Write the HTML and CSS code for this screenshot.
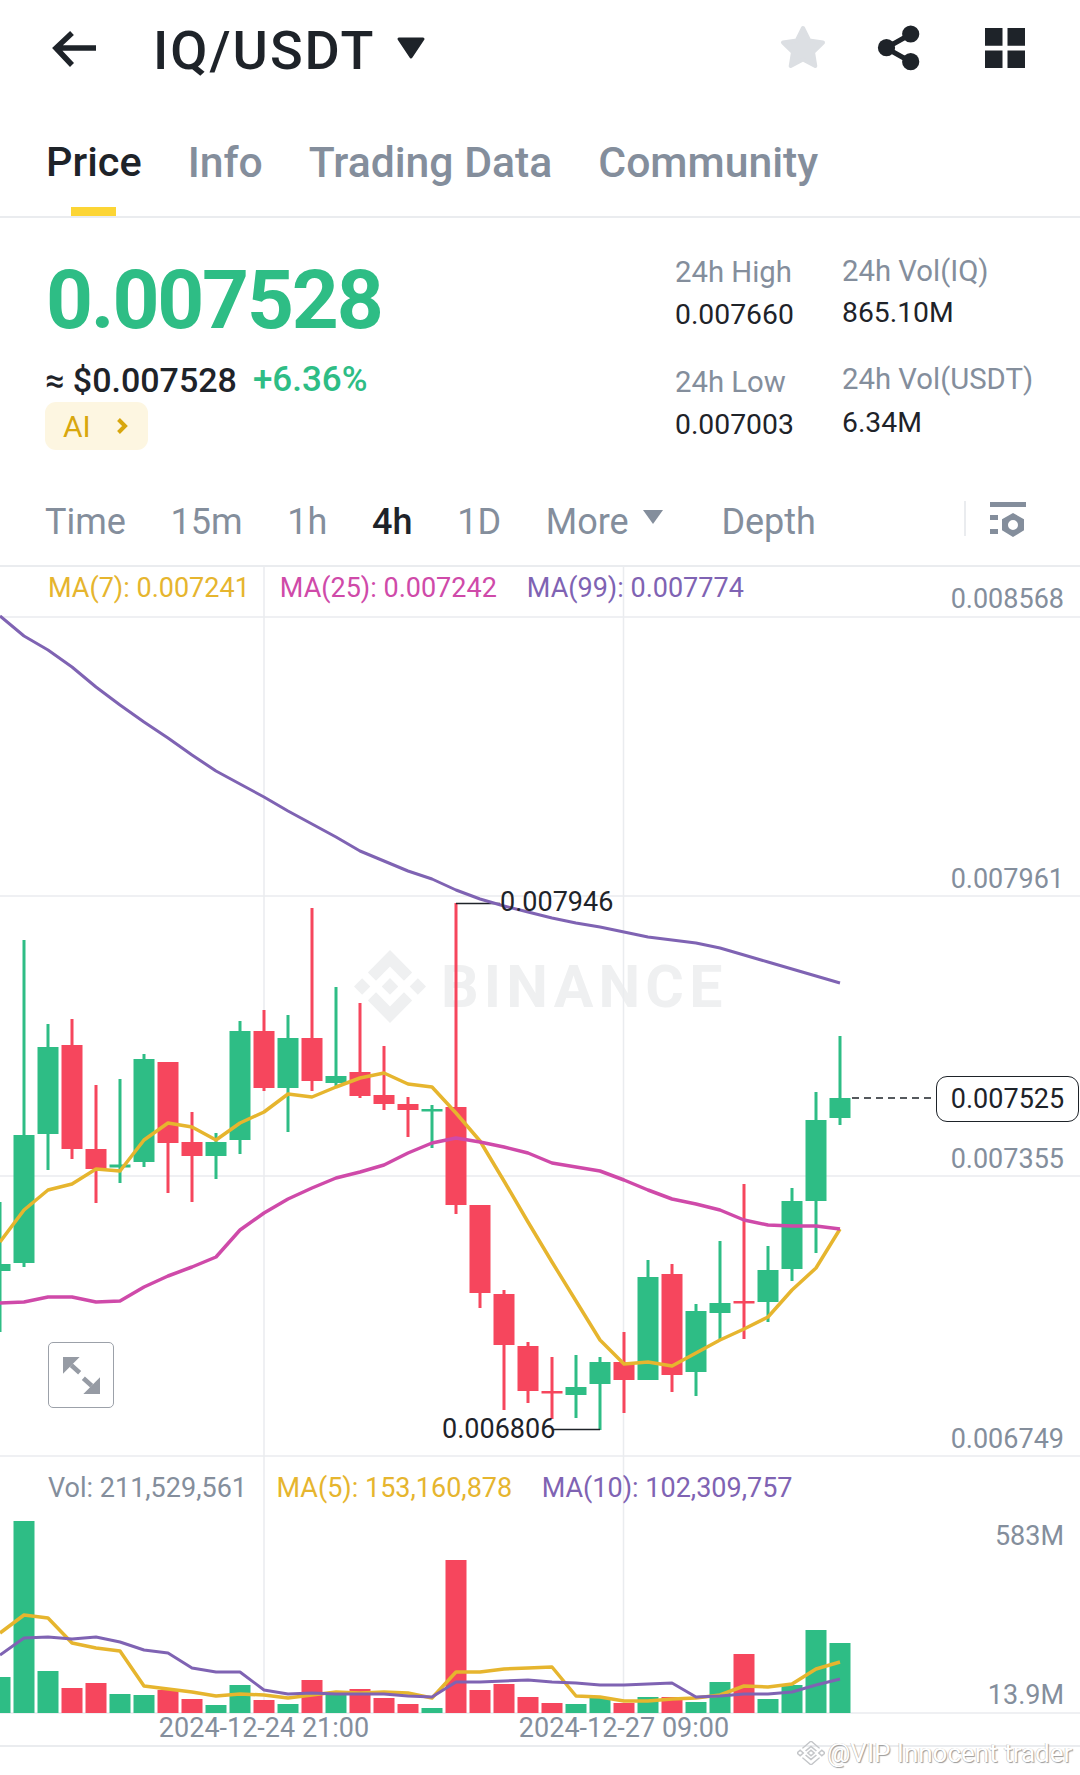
FILE: index.html
```html
<!DOCTYPE html>
<html lang="en">
<head>
<meta charset="utf-8">
<title>IQ/USDT</title>
<link rel="stylesheet" href="styles.css">
</head>
<body>
<div class="page">
  <header class="topbar">
    <svg class="ico-back" viewBox="50 25 50 46"><path d="M96 48H57M72 33 56 48l16 17"/></svg>
    <h1 class="pair">IQ/USDT</h1>
    <svg class="ico-caret" viewBox="396 36 32 26"><path d="M400 40h24l-12 18z"/></svg>
    <div class="top-actions">
      <svg class="ico-star" viewBox="780 25 46 48"><path d="M803 29l6.2 12.5 13.8 2-10 9.7 2.3 13.8-12.3-6.5-12.3 6.5 2.3-13.8-10-9.7 13.8-2z"/></svg>
      <svg class="ico-share" viewBox="876 24 46 48"><path class="link" d="M911 34 886 48l25 14"/><circle cx="910.7" cy="34" r="8.6"/><circle cx="886.5" cy="47.7" r="8.6"/><circle cx="910.7" cy="61.7" r="8.6"/></svg>
      <svg class="ico-grid" viewBox="985 28 40 40"><path d="M985 28h17.5v17.7H985zM1007.5 28H1025v17.7h-17.5zM985 50.5h17.5V68H985zM1007.5 50.5H1025V68h-17.5z"/></svg>
    </div>
  </header>

  <nav class="tabs">
    <div class="tab tab-on">Price<span class="tab-bar"></span></div>
    <div class="tab">Info</div>
    <div class="tab">Trading Data</div>
    <div class="tab">Community</div>
  </nav>

  <section class="summary">
    <div class="sum-left">
      <div class="last">0.007528</div>
      <div class="fiat"><span class="usd">≈ $0.007528</span><span class="chg">+6.36%</span></div>
      <div class="ai">AI<svg class="ico-chev" viewBox="0 0 12 18"><path d="M2.5 2.5 9 9l-6.500 6.500"/></svg></div>
    </div>
    <div class="stats">
      <dl class="stat-col stat-a">
        <dt>24h High</dt><dd>0.007660</dd>
        <dt class="second">24h Low</dt><dd>0.007003</dd>
      </dl>
      <dl class="stat-col stat-b">
        <dt>24h Vol(IQ)</dt><dd>865.10M</dd>
        <dt class="second">24h Vol(USDT)</dt><dd>6.34M</dd>
      </dl>
    </div>
  </section>

  <div class="ranges">
    <span class="range">Time</span>
    <span class="range">15m</span>
    <span class="range">1h</span>
    <span class="range range-on">4h</span>
    <span class="range">1D</span>
    <span class="range range-more">More<svg class="ico-more" viewBox="0 0 20 14"><path d="M0 0h20L10 14z"/></svg></span>
    <span class="range">Depth</span>
    <span class="range-sep"></span>
    <svg class="ico-setup" viewBox="990 502 36 36"><path d="M990 503h36v5h-36zM990 516h8v5h-8zM990 530h8v5h-8z"/><path fill-rule="evenodd" d="M1013 514l11 6.200v11L1013 538l-11-6.800v-11zM1013 521a5 5 0 1 0 0 10 5 5 0 0 0 0-10z"/></svg>
  </div>

  <section class="chart">
    <div class="wm">
      <svg class="wm-logo" viewBox="0 0 126.610 126.610" preserveAspectRatio="none"><path d="M38.730 53.200 63.300 28.640l24.590 24.580 14.300-14.300L63.300 0 24.420 38.900l14.310 14.300zM0 63.300l14.300-14.310L28.610 63.300 14.300 77.610zM38.730 73.410 63.300 97.970l24.590-24.580 14.310 14.290L63.300 126.610 24.420 87.720zM98 63.310l14.300-14.310 14.310 14.300-14.310 14.310zM77.830 63.300 63.300 48.760 48.780 63.270 63.300 77.780z"/></svg>
      <span class="wm-text">BINANCE</span>
    </div>

    <svg class="plot" viewBox="0 565 1080 1180">
      <path class="rule" d="M0 566H1080"/>
      <path class="grid" d="M0 617H1080M0 896H1080M0 1176H1080M0 1456H1080M0 1713H1080M264 565V1713M623.500 565V1713"/>
      <path class="wick up" d="M0 1202V1332M24 940V1267M48 1024V1170M120 1079V1183M144 1054V1167M216 1133V1179M240 1021V1154M288 1015V1132M336 987V1087M432 1105V1148M576 1355V1418M600 1357V1430M648 1260V1380M696 1304V1396M720 1241V1339M768 1246V1322M792 1188V1281M816 1092V1253M840 1036V1125"/>
      <path class="wick dn" d="M72 1019V1159M96 1085V1203M168 1062V1193M192 1112V1202M264 1010V1091M312 908V1091M360 1003V1098M384 1046V1110M408 1097V1137M456 903V1214M480 1205V1308M504 1290V1410M528 1342V1403M552 1357V1419M624 1332V1413M672 1264V1392M744 1184V1339"/>
      <path class="body up" d="M0 1264V1271M24 1135V1263M48 1047V1134M120 1164.500V1167.500M144 1059V1162M216 1142V1156M240 1031V1140M288 1038V1088M336 1076V1083M432 1109V1111.500M576 1387V1395M600 1362V1384M648 1277V1380M696 1311V1372M720 1303V1313M768 1270V1302M792 1201V1269M816 1120V1201M840 1098V1118"/>
      <path class="body dn" d="M72 1045V1149M96 1149V1169M168 1062V1143M192 1142V1156M264 1031V1088M312 1038V1081M360 1072V1096M384 1095V1104M408 1104V1110M456 1107V1205M480 1205V1293M504 1294V1345M528 1346V1391M552 1391V1393.500M624 1362V1380M672 1274V1375M744 1301V1303.500"/>
      <path class="leader" d="M456 903.500H500M553 1429.500H600"/>
      <path class="last-dash" d="M852 1098H936"/>
      <polyline class="ma ma7" points="0,1242 24,1210 48,1190 72,1184 96,1169 120,1171 144,1140 168,1123 192,1127 216,1140 240,1123 264,1112 288,1094 312,1097 336,1087 360,1078 384,1073 408,1084 432,1087 456,1113 480,1141 504,1181 528,1222 552,1262 576,1301 600,1340 624,1364 648,1362 672,1366 696,1353 720,1340 744,1329 768,1317 792,1290 816,1268 840,1229"/>
      <polyline class="ma ma25" points="0,1303 24,1302 48,1297 72,1297 96,1302 120,1301 144,1287 168,1276 192,1267 216,1257 240,1230 264,1213 288,1199 312,1188 336,1178 360,1172 384,1165 408,1153 432,1143 456,1138 480,1142 504,1147 528,1153 552,1163 576,1167 600,1171 624,1180 648,1190 672,1199 696,1204 720,1210 744,1220 768,1225 792,1226 816,1226 840,1229"/>
      <polyline class="ma ma99" points="0,616 24,636 48,650 72,667 96,687 120,705 144,722 168,738 192,755 216,771 240,784 264,797 288,811 312,824 336,837 360,851 384,861 408,871 432,879 456,890 480,899 504,906 528,912 552,918 576,923 600,927 624,932 648,937 672,940 696,943 720,948 744,955 768,962 792,969 816,976 840,983"/>
      <path class="body up" d="M0 1677V1713M24 1521V1713M48 1671V1713M120 1694V1713M144 1695V1713M216 1705V1713M240 1685V1713M288 1704V1713M336 1693V1713M432 1708V1713M576 1704V1713M600 1697V1713M648 1697V1713M696 1702V1713M720 1682V1713M768 1699V1713M792 1685V1713M816 1630V1713M840 1643V1713"/>
      <path class="body dn" d="M72 1688V1713M96 1683V1713M168 1690V1713M192 1699V1713M264 1700V1713M312 1680V1713M360 1689V1713M384 1698V1713M408 1704V1713M456 1560V1713M480 1690V1713M504 1684V1713M528 1697V1713M552 1703V1713M624 1703V1713M672 1697V1713M744 1654V1713"/>
      <polyline class="ma ma7" points="0,1633 24,1615 48,1618 72,1643 96,1648 120,1651 144,1686 168,1689 192,1692 216,1696 240,1694 264,1695 288,1698 312,1695 336,1692 360,1693 384,1692 408,1693 432,1698 456,1672 480,1672 504,1669 528,1668 552,1667 576,1696 600,1697 624,1701 648,1701 672,1699 696,1698 720,1695 744,1686 768,1687 792,1684 816,1669 840,1662"/>
      <polyline class="ma ma99" points="0,1655 24,1638 48,1637 72,1639 96,1637 120,1642 144,1650 168,1653 192,1668 216,1672 240,1672 264,1690 288,1694 312,1693 336,1694 360,1694 384,1694 408,1696 432,1697 456,1682 480,1682 504,1681 528,1680 552,1682 576,1683 600,1685 624,1685 648,1684 672,1683 696,1697 720,1696 744,1694 768,1694 792,1692 816,1685 840,1679"/>
    </svg>

    <div class="legend legend-price">
      <span class="c-y">MA(7): 0.007241</span>
      <span class="c-m">MA(25): 0.007242</span>
      <span class="c-p">MA(99): 0.007774</span>
    </div>
    <div class="legend legend-vol">
      <span class="c-g">Vol: 211,529,561</span>
      <span class="c-y">MA(5): 153,160,878</span>
      <span class="c-p">MA(10): 102,309,757</span>
    </div>

    <span class="ax ax-1">0.008568</span>
    <span class="ax ax-2">0.007961</span>
    <span class="ax ax-3">0.007355</span>
    <span class="ax ax-4">0.006749</span>
    <span class="ax ax-5">583M</span>
    <span class="ax ax-6">13.9M</span>
    <span class="date date-1">2024-12-24 21:00</span>
    <span class="date date-2">2024-12-27 09:00</span>
    <span class="mark mark-hi">0.007946</span>
    <span class="mark mark-lo">0.006806</span>
    <span class="now">0.007525</span>

    <div class="expand">
      <svg class="ico-expand" viewBox="0 0 40 40"><path d="M0 0h18L0 18zM40 40H22L40 22z"/><path class="stem" d="M9 9l9 8M22 23l9 8"/></svg>
    </div>
  </section>

  <div class="credit">
    <svg class="credit-logo" viewBox="0 0 126.610 126.610" preserveAspectRatio="none"><path d="M38.730 53.200 63.300 28.640l24.590 24.580M24.420 38.900 63.300 0l38.890 38.920M14.300 49 0 63.300l14.300 14.310L28.610 63.300zM38.730 73.410 63.300 97.970l24.590-24.580M24.420 87.720 63.300 126.610l38.890-38.920M112.300 49 98 63.310l14.300 14.300 14.310-14.310zM63.300 48.760 48.780 63.270 63.300 77.780 77.830 63.300z"/></svg>
    <span class="credit-text">@VIP Innocent trader</span>
  </div>
</div>
</body>
</html>
```
FILE: styles.css
```css
* { box-sizing: border-box; }
html, body { margin: 0; padding: 0; background: #fff; }
body { font-family: Roboto, "Noto Sans", sans-serif; color: #1e2329; }
.page { width: 1080px; height: 1775px; position: relative; overflow: hidden; }

/* top bar */
.topbar { height: 96px; display: flex; align-items: center; padding-left: 50px; }
.ico-back { width: 50px; height: 46px; fill: none; stroke: #1e2329; stroke-width: 5.500; }
.pair { margin: 6px 0 0 53px; font-size: 54px; font-weight: 500; letter-spacing: 2px; line-height: 60px; white-space: nowrap; }
.ico-caret { width: 32px; height: 26px; margin: -1px 0 0 20px; fill: #1e2329; stroke: #1e2329; stroke-width: 3; stroke-linejoin: round; }
.top-actions { margin-left: auto; display: flex; align-items: center; padding-right: 55px; }
.ico-star { width: 46px; height: 48px; fill: #dcdfe3; stroke: #dcdfe3; stroke-width: 4; stroke-linejoin: round; }
.ico-share { width: 46px; height: 48px; margin-left: 50px; fill: #1e2329; }
.ico-share .link { fill: none; stroke: #1e2329; stroke-width: 5; }
.ico-grid { width: 40px; height: 40px; margin-left: 63px; fill: #1e2329; }

/* tabs */
.tabs { height: 122px; padding: 41px 0 0 46px; display: flex; gap: 46px; border-bottom: 2px solid #eaecef; }
.tab { display: flex; flex-direction: column; align-items: center; font-size: 42.700px; font-weight: 500; line-height: 50px; color: #848e9c; white-space: nowrap; }
.tab-on { color: #1e2329; font-size: 41.500px; }
.tab-bar { width: 45px; height: 9px; margin-top: 20px; background: #fcd535; }

/* summary */
.summary { height: 262px; display: flex; justify-content: space-between; }
.sum-left { padding: 42px 0 0 45px; }
.last { font-size: 82px; font-weight: 700; line-height: 80px; color: #2ebd85; letter-spacing: -2.200px; margin-left: 1px; }
.fiat { margin-top: 20px; height: 40px; line-height: 40px; display: flex; gap: 16px; white-space: nowrap; font-size: 34px; font-weight: 500; }
.chg { color: #2ebd85; font-size: 35px; }
.ai { margin-top: 2px; width: 103px; height: 48px; padding-left: 18px; display: flex; align-items: center; gap: 25px; border-radius: 11px; background: #fdf6e1; color: #d8a70e; font-size: 30px; }
.ico-chev { width: 12px; height: 18px; fill: none; stroke: #d8a70e; stroke-width: 4; }
.stats { width: 405px; display: flex; }
.stat-col { margin: 0; font-size: 29px; line-height: 42px; white-space: nowrap; }
.stat-col dt { color: #848e9c; font-size: 29.300px; }
.stat-col dd { margin: 0; color: #1e2329; font-size: 28.300px; }
.stat-a dt { line-height: 43px; }
.stat-a dt.second { margin-top: 25px; }
.stat-a { width: 167px; padding-top: 33px; }
.stat-b { padding-top: 32px; }
.stat-b dt.second { margin-top: 22px; line-height: 46px; }

/* ranges */
.ranges { height: 85px; padding: 0 0 2px 45px; display: flex; align-items: center; gap: 44.700px; font-size: 36px; color: #848e9c; }
.range { white-space: nowrap; }
.range-on { color: #1e2329; font-weight: 500; }
.range-more { display: flex; align-items: center; gap: 14px; margin-right: 14px; }
.ico-more { width: 20px; height: 14px; margin-top: -10px; fill: #848e9c; }
.range-sep { width: 2px; height: 35px; margin: -6px 0 0 auto; background: #eaecef; }
.ico-setup { width: 36px; height: 36px; margin: -6px 54px 0 -20.700px; fill: #848e9c; }

/* chart */
.chart { height: 1182px; position: relative; border-bottom: 2px solid #eaecef; }
.plot { position: absolute; left: 0; top: 0; width: 1080px; height: 1180px; display: block; }
.rule { fill: none; stroke: #eaecef; stroke-width: 2; }
.grid { fill: none; stroke: #eaecef; stroke-width: 1.500; }
.wick, .body, .leader, .last-dash, .ma { fill: none; }
.wick { stroke-width: 3; }
.body { stroke-width: 21; }
.up { stroke: #2ebd85; }
.dn { stroke: #f6465d; }
.leader { stroke: #1e2329; stroke-width: 1.500; }
.last-dash { stroke: #1e2329; stroke-width: 1.500; stroke-dasharray: 7 5; }
.ma { stroke-width: 3.500; stroke-linejoin: round; }
.ma7 { stroke: #e6b52e; }
.ma25 { stroke: #cf4aa9; }
.ma99 { stroke: #7f63b3; stroke-width: 3; }

.wm { position: absolute; left: 354px; top: 385px; display: flex; align-items: center; gap: 15px; }
.wm-logo { width: 72px; height: 73px; fill: #eff0f1; }
.wm-text { font-size: 59px; font-weight: 700; letter-spacing: 5.200px; color: #eff0f1; line-height: 60px; }

.legend { position: absolute; left: 48px; display: flex; font-size: 27px; line-height: 34px; white-space: nowrap; }
.legend-price { top: 6px; gap: 30px; }
.legend-vol { top: 906px; gap: 29.500px; }
.c-y { color: #e6b52e; }
.c-m { color: #cf4aa9; }
.c-p { color: #7f63b3; }
.c-g { color: #848e9c; }

.ax { position: absolute; right: 16px; font-size: 27px; line-height: 34px; color: #848e9c; }
.ax-1 { top: 17px; }
.ax-2 { top: 297px; }
.ax-3 { top: 577px; }
.ax-4 { top: 857px; }
.ax-5 { top: 954px; }
.ax-6 { top: 1113px; }
.date { position: absolute; top: 1146px; width: 240px; text-align: center; font-size: 27px; line-height: 34px; color: #848e9c; }
.date-1 { left: 144px; }
.date-2 { left: 504px; }
.mark { position: absolute; font-size: 27px; line-height: 34px; color: #1e2329; }
.mark-hi { left: 500px; top: 320px; }
.mark-lo { left: 442px; top: 847px; }
.now { position: absolute; left: 936px; top: 511px; width: 143px; height: 46px; border: 1.500px solid #1e2329; border-radius: 11px; background: #fff; display: flex; align-items: center; justify-content: center; font-size: 27px; color: #1e2329; }

.expand { position: absolute; left: 48px; top: 777px; width: 66px; height: 66px; border: 1.500px solid #9ca1a9; border-radius: 5px; background: #fff; display: flex; align-items: center; justify-content: center; }
.ico-expand { width: 37px; height: 37px; fill: #969ba4; }
.stem { fill: none; stroke: #969ba4; stroke-width: 5; }

/* credit */
.credit { position: absolute; left: 797px; top: 1740px; display: flex; align-items: center; gap: 2px; }
.credit-logo { width: 28px; height: 24px; fill: none; stroke: #c4c6c9; stroke-width: 7; }
.credit-text { font-size: 26px; line-height: 26px; color: #fff; text-shadow: 1px 1px 1px #9a9a9a, -0.500px -0.500px 0.500px #bbb; white-space: nowrap; }
```
